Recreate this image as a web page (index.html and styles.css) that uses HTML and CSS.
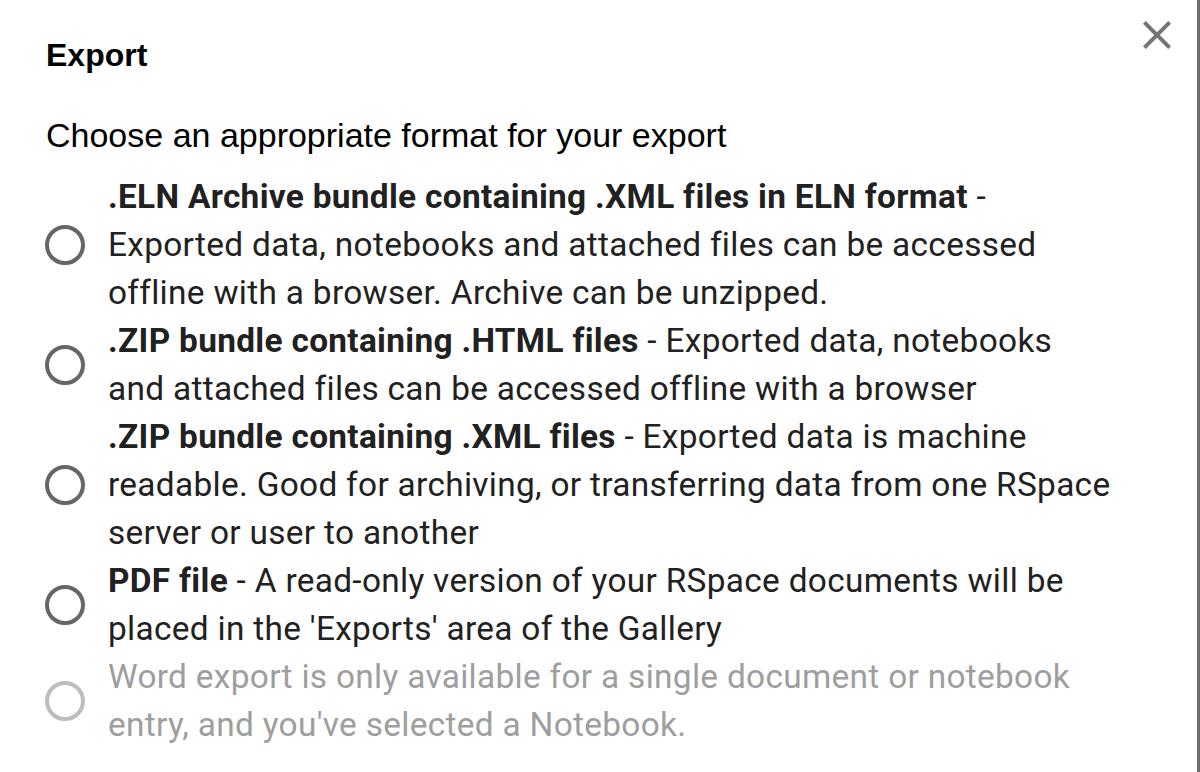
FILE: index.html
```html
<!DOCTYPE html>
<html lang="en">
<head>
<meta charset="utf-8">
<title>Export</title>
<link rel="stylesheet" href="styles.css">
</head>
<body>
<div class="page">
  <div class="dialog">
    <button class="close" aria-label="close">
      <svg viewBox="0 0 24 24" width="48" height="48"><path d="M19 6.41 17.59 5 12 10.59 6.41 5 5 6.41 10.59 12 5 17.59 6.41 19 12 13.41 17.59 19 19 17.59 13.41 12z" fill="currentColor"/></svg>
    </button>
    <h2 class="title">Export</h2>
    <p class="intro">Choose an appropriate format for your export</p>
    <div class="options">
      <label class="option">
        <span class="radio"><span class="ring"></span></span>
        <span class="label"><b>.ELN Archive bundle containing .XML files in ELN format</b> - Exported data, notebooks and attached files can be accessed offline with a browser. Archive can be unzipped.</span>
      </label>
      <label class="option">
        <span class="radio"><span class="ring"></span></span>
        <span class="label"><b>.ZIP bundle containing .HTML files</b> - Exported data, notebooks and attached files can be accessed offline with a browser</span>
      </label>
      <label class="option">
        <span class="radio"><span class="ring"></span></span>
        <span class="label"><b>.ZIP bundle containing .XML files</b> - Exported data is machine readable. Good for archiving, or transferring data from one RSpace server or user to another</span>
      </label>
      <label class="option">
        <span class="radio"><span class="ring"></span></span>
        <span class="label"><b>PDF file</b> - A read-only version of your RSpace documents will be placed in the 'Exports' area of the Gallery</span>
      </label>
      <label class="option disabled">
        <span class="radio"><span class="ring"></span></span>
        <span class="label">Word export is only available for a single document or notebook entry, and you've selected a Notebook.</span>
      </label>
    </div>
  </div>
  <div class="edge"></div>
</div>
</body>
</html>
```
FILE: styles.css
```css
html, body {
  margin: 0;
  padding: 0;
  background: #ffffff;
}
.page {
  display: flex;
  width: 1200px;
  height: 772px;
  overflow: hidden;
}
.dialog {
  position: relative;
  flex: 1;
  background: #ffffff;
  padding: 31px 81px 0 46px;
  box-sizing: border-box;
}
.edge {
  width: 3px;
  background: #6e6e6e;
}
.close {
  position: absolute;
  top: 11px;
  left: 1133px;
  width: 48px;
  height: 48px;
  padding: 0;
  border: 0;
  background: transparent;
  color: #757575;
}
.close svg {
  display: block;
}
.title {
  margin: 0;
  font-family: "Liberation Sans", Arial, sans-serif;
  font-weight: 700;
  font-size: 32px;
  line-height: 48px;
  color: #000000;
}
.intro {
  margin: 32px 0 0 0;
  font-family: "Liberation Sans", Arial, sans-serif;
  font-size: 34px;
  line-height: 48px;
  color: #000000;
}
.options {
  margin: 14px 0 0 -23px;
  display: flex;
  flex-direction: column;
}
.option {
  display: flex;
  align-items: center;
}
.radio {
  flex: none;
  width: 84px;
  height: 84px;
  margin: -18px 1px -18px 0;
  display: flex;
  align-items: center;
  justify-content: center;
}
.ring {
  width: 40px;
  height: 40px;
  box-sizing: border-box;
  border: 4px solid #666666;
  border-radius: 50%;
}
.label {
  font-family: Roboto, "Noto Sans", sans-serif;
  font-size: 33.4px;
  line-height: 48px;
  letter-spacing: 0.31px;
  color: #212121;
}
.label b {
  font-weight: 700;
}
.disabled .ring {
  border-color: #bdbdbd;
}
.disabled .label {
  color: #9e9e9e;
}
```
